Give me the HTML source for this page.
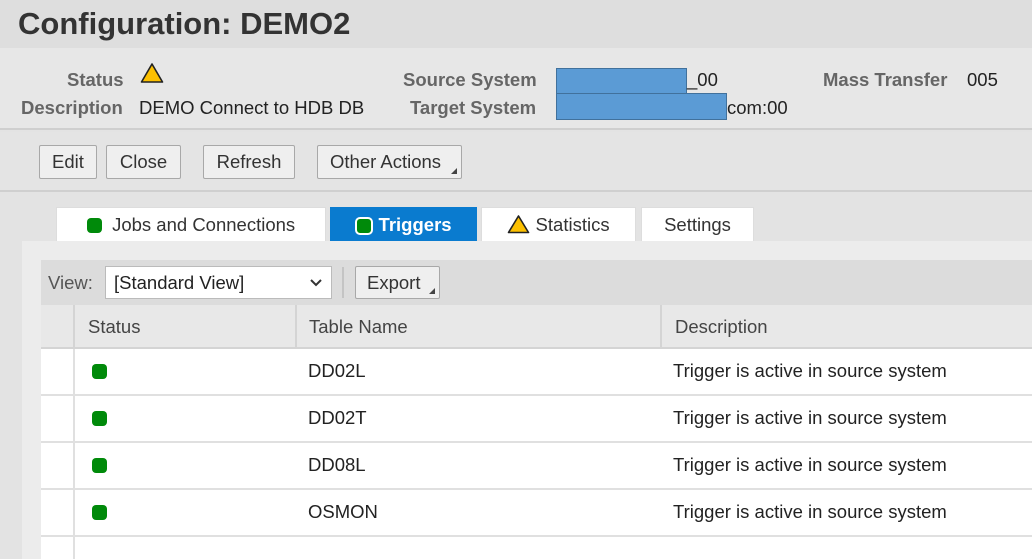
<!DOCTYPE html>
<html><head><meta charset="utf-8"><style>
*{box-sizing:border-box;margin:0;padding:0}
html,body{width:1032px;height:559px;overflow:hidden}
body{background:#e3e3e3;font-family:"Liberation Sans",Arial,sans-serif;position:relative;color:#222}
.a{position:absolute;white-space:nowrap}
.lbl{color:#666;font-weight:bold;font-size:18.5px}
.v{font-size:18.5px;color:#222}
.btn{position:absolute;height:34px;border:1px solid #a8a8a8;background:#efefef;font-size:18.5px;color:#333;text-align:center;line-height:32px;border-radius:2px}
.corner{position:absolute;right:4px;bottom:4px;width:0;height:0;border-left:6px solid transparent;border-bottom:6px solid #444}
.tab{position:absolute;top:207px;height:34px;background:#fff;border:1px solid #ddd;border-bottom:none;font-size:18.5px;color:#333;line-height:33px;text-align:center}
.dot{display:inline-block;width:15px;height:15px;background:#008a0a;border-radius:4px;vertical-align:-2px}
.row{position:absolute;left:41px;width:991px;height:47px;background:#fff;border-bottom:2px solid #e0e0e0}
.cell{position:absolute;top:0;height:100%;border-left:2px solid #e0e0e0}
</style></head><body>
<div class="a" style="left:0;top:0;width:1032px;height:48px;background:#dedede"></div>
<div class="a" style="left:18px;top:6px;font-size:31px;font-weight:bold;color:#333">Configuration: DEMO2</div>
<div class="a" style="left:0;top:48px;width:1032px;height:82px;background:#e7e7e7;border-bottom:2px solid #cfcfcf"></div>
<div class="a lbl" style="left:67px;top:69px">Status</div>
<svg class="a" style="left:140px;top:62px" width="24" height="22"><path d="M12 2 L22.5 20 L1.5 20 Z" fill="#fcc000" stroke="#222" stroke-width="1.6" stroke-linejoin="round"/></svg>
<div class="a lbl" style="left:21px;top:97px">Description</div>
<div class="a v" style="left:139px;top:97px">DEMO Connect to HDB DB</div>
<div class="a lbl" style="left:403px;top:69px">Source System</div>
<div class="a lbl" style="left:410px;top:97px">Target System</div>
<div class="a" style="left:556px;top:68px;width:131px;height:26px;background:#5b9bd5;border:1px solid #41719c"></div>
<div class="a v" style="left:687px;top:69px">_00</div>
<div class="a" style="left:556px;top:93px;width:171px;height:27px;background:#5b9bd5;border:1px solid #41719c"></div>
<div class="a v" style="left:727px;top:97px">com:00</div>
<div class="a lbl" style="left:823px;top:69px">Mass Transfer</div>
<div class="a v" style="left:967px;top:69px">005</div>
<div class="a" style="left:0;top:132px;width:1032px;height:60px;background:#e4e4e4;border-bottom:2px solid #cfcfcf"></div>
<div class="btn" style="left:39px;top:145px;width:58px">Edit</div>
<div class="btn" style="left:106px;top:145px;width:75px">Close</div>
<div class="btn" style="left:203px;top:145px;width:92px">Refresh</div>
<div class="btn" style="left:317px;top:145px;width:145px;text-align:left;padding-left:12px">Other Actions<span class="corner"></span></div>
<div class="tab" style="left:56px;width:270px"><span class="dot"></span>&nbsp; Jobs and Connections</div>
<div class="tab" style="left:330px;width:147px;background:#0a7bcf;border-color:#0a7bcf;color:#fff;font-weight:bold"><span class="dot" style="border:2px solid #fff;width:18px;height:18px;border-radius:5px;vertical-align:-4px"></span> Triggers</div>
<div class="tab" style="left:481px;width:155px"><svg width="23" height="20" style="vertical-align:-3px"><path d="M11.5 2 L21.5 18.5 L1.5 18.5 Z" fill="#fcc000" stroke="#222" stroke-width="1.6" stroke-linejoin="round"/></svg> Statistics</div>
<div class="tab" style="left:641px;width:113px">Settings</div>
<div class="a" style="left:22px;top:241px;width:1010px;height:318px;background:#ececec"></div>
<div class="a" style="left:41px;top:260px;width:991px;height:45px;background:#dcdcdc"></div>
<div class="a" style="left:48px;top:272px;font-size:18.5px;color:#555">View:</div>
<div class="a" style="left:105px;top:266px;width:227px;height:33px;background:#fff;border:1px solid #bbb;font-size:18.5px;line-height:31px;padding-left:8px;color:#222">[Standard View]
<svg style="position:absolute;right:9px;top:12px" width="12" height="8"><path d="M1 1 L6 6 L11 1" fill="none" stroke="#333" stroke-width="2"/></svg></div>
<div class="a" style="left:342px;top:267px;width:2px;height:31px;background:#c4c4c4"></div>
<div class="btn" style="left:355px;top:266px;width:85px;height:33px;line-height:31px;text-align:left;padding-left:11px">Export<span class="corner"></span></div>
<div class="a" style="left:41px;top:305px;width:991px;height:44px;background:#e8e8e8;border-bottom:2px solid #d4d4d4"></div>
<div class="a" style="left:73px;top:305px;width:2px;height:43px;background:#d4d4d4"></div>
<div class="a" style="left:295px;top:305px;width:2px;height:43px;background:#d4d4d4"></div>
<div class="a" style="left:660px;top:305px;width:2px;height:43px;background:#d4d4d4"></div>
<div class="a" style="left:88px;top:316px;font-size:18.5px;color:#444">Status</div>
<div class="a" style="left:309px;top:316px;font-size:18.5px;color:#444">Table Name</div>
<div class="a" style="left:675px;top:316px;font-size:18.5px;color:#444">Description</div>

<div class="row" style="top:349px"><div class="cell" style="left:32px"></div><span class="dot a" style="left:51px;top:15px"></span><div class="a v" style="left:267px;top:11px">DD02L</div><div class="a v" style="left:632px;top:11px">Trigger is active in source system</div></div>
<div class="row" style="top:396px"><div class="cell" style="left:32px"></div><span class="dot a" style="left:51px;top:15px"></span><div class="a v" style="left:267px;top:11px">DD02T</div><div class="a v" style="left:632px;top:11px">Trigger is active in source system</div></div>
<div class="row" style="top:443px"><div class="cell" style="left:32px"></div><span class="dot a" style="left:51px;top:15px"></span><div class="a v" style="left:267px;top:11px">DD08L</div><div class="a v" style="left:632px;top:11px">Trigger is active in source system</div></div>
<div class="row" style="top:490px"><div class="cell" style="left:32px"></div><span class="dot a" style="left:51px;top:15px"></span><div class="a v" style="left:267px;top:11px">OSMON</div><div class="a v" style="left:632px;top:11px">Trigger is active in source system</div></div>
<div class="row" style="top:537px;height:22px;border-bottom:none"><div class="cell" style="left:32px"></div></div>
</body></html>
